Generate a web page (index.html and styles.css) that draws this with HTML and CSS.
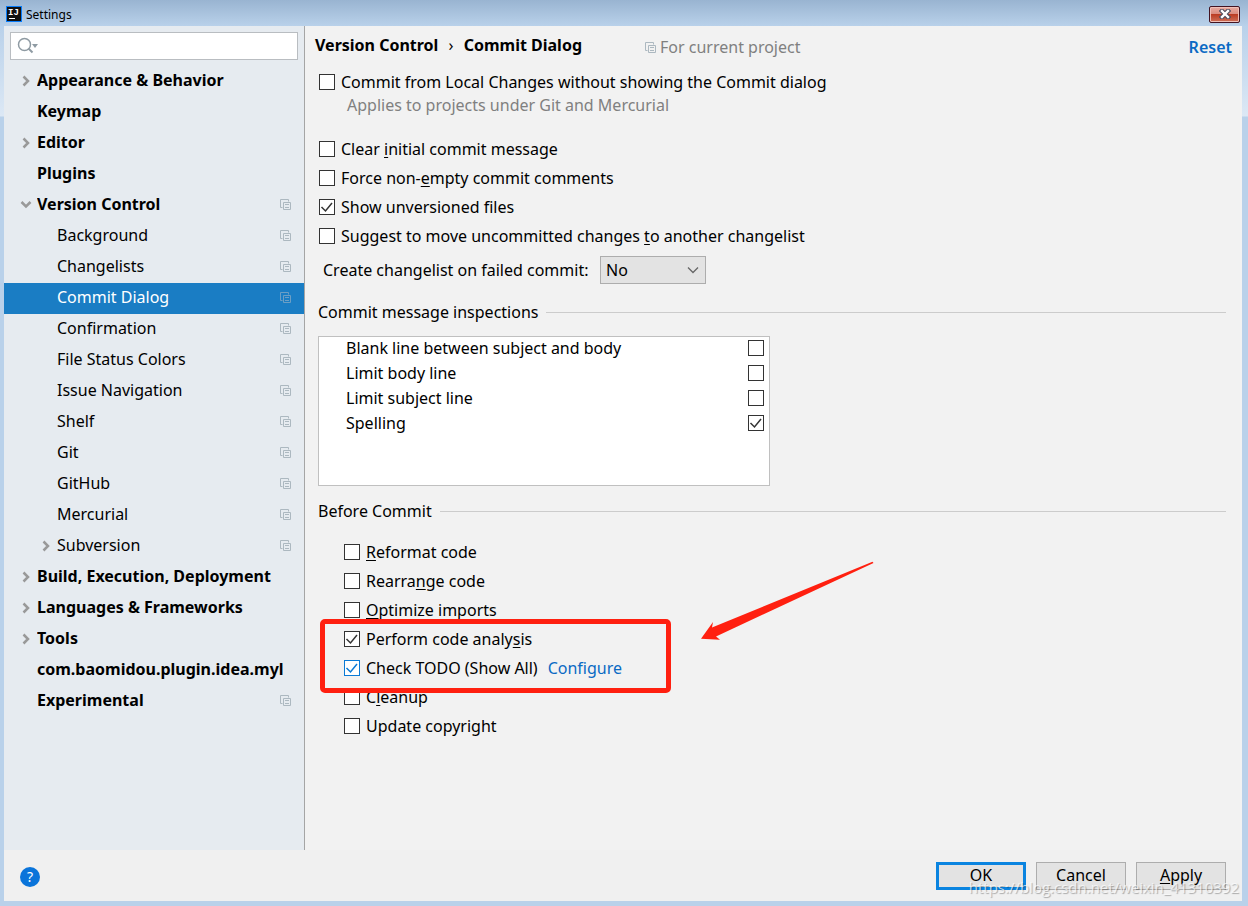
FILE: index.html
```html
<!DOCTYPE html>
<html lang="en">
<head>
  <meta charset="UTF-8">
  <title>Settings</title>
  <meta name="viewport" content="width=device-width, initial-scale=1">
  <link rel="stylesheet" href="styles.css">
</head>
<body>
<svg class="defs" width="0" height="0">
  <symbol id="copy" viewBox="0 0 11 11">
    <path d="M2.500 8.500h-2v-8h8v2" fill="none" stroke="currentColor"/>
    <path d="M3.500 3.500h7v7h-7z" fill="none" stroke="currentColor"/>
    <path d="M5 5.500h4M5 8.500h4" fill="none" stroke="currentColor"/>
  </symbol>
  <symbol id="right" viewBox="0 0 12 12">
    <path d="M3.500 1.500 8 6l-4.500 4.500" fill="none" stroke="currentColor" stroke-width="2.500"/>
  </symbol>
  <symbol id="down" viewBox="0 0 12 12">
    <path d="M1.500 3 6 7.500 10.500 3" fill="none" stroke="currentColor" stroke-width="2.500"/>
  </symbol>
</svg>
<div class="window">
  <header class="titlebar">
    <svg class="app-icon" width="16" height="16" viewBox="0 0 16 16">
      <rect x=".5" y=".5" width="15" height="15" fill="#111" stroke="#087cfa"/>
      <text x="2" y="9" font-family="Liberation Mono" font-size="9" font-weight="bold" fill="#fff">IJ</text>
      <rect x="3" y="12" width="6" height="1" fill="#fff"/>
    </svg>
    <span class="title">Settings</span>
    <button class="close-btn" aria-label="Close">
      <svg width="12" height="10" viewBox="0 0 12 10">
        <path d="M3 2l6 6M9 2l-6 6" stroke="#4a4a5c" stroke-width="4.500" stroke-linecap="square"/>
        <path d="M3 2l6 6M9 2l-6 6" stroke="#fff" stroke-width="2.400" stroke-linecap="square"/>
      </svg>
    </button>
  </header>

  <div class="content">
    <nav class="sidebar">
      <label class="search">
        <svg width="22" height="18" viewBox="0 0 22 18">
          <circle cx="7.500" cy="7.500" r="6" fill="none" stroke="#8f9ba3" stroke-width="1.500"/>
          <path d="M11.500 11.500l4 4" stroke="#8f9ba3" stroke-width="2"/>
          <path d="M15 7h6l-3 4z" fill="#8f9ba3"/>
        </svg>
        <input type="text" aria-label="Search settings">
      </label>
      <ul class="tree">
        <li class="group"><svg class="arrow"><use href="#right"/></svg><span>Appearance &amp; Behavior</span></li>
        <li class="group"><span>Keymap</span></li>
        <li class="group"><svg class="arrow"><use href="#right"/></svg><span>Editor</span></li>
        <li class="group"><span>Plugins</span></li>
        <li class="group"><svg class="arrow"><use href="#down"/></svg><span>Version Control</span><svg class="copy"><use href="#copy"/></svg></li>
        <li><span>Background</span><svg class="copy"><use href="#copy"/></svg></li>
        <li><span>Changelists</span><svg class="copy"><use href="#copy"/></svg></li>
        <li class="selected"><span>Commit Dialog</span><svg class="copy"><use href="#copy"/></svg></li>
        <li><span>Confirmation</span><svg class="copy"><use href="#copy"/></svg></li>
        <li><span>File Status Colors</span><svg class="copy"><use href="#copy"/></svg></li>
        <li><span>Issue Navigation</span><svg class="copy"><use href="#copy"/></svg></li>
        <li><span>Shelf</span><svg class="copy"><use href="#copy"/></svg></li>
        <li><span>Git</span><svg class="copy"><use href="#copy"/></svg></li>
        <li><span>GitHub</span><svg class="copy"><use href="#copy"/></svg></li>
        <li><span>Mercurial</span><svg class="copy"><use href="#copy"/></svg></li>
        <li><svg class="arrow"><use href="#right"/></svg><span>Subversion</span><svg class="copy"><use href="#copy"/></svg></li>
        <li class="group"><svg class="arrow"><use href="#right"/></svg><span>Build, Execution, Deployment</span></li>
        <li class="group"><svg class="arrow"><use href="#right"/></svg><span>Languages &amp; Frameworks</span></li>
        <li class="group"><svg class="arrow"><use href="#right"/></svg><span>Tools</span></li>
        <li class="group"><span>com.baomidou.plugin.idea.myl</span></li>
        <li class="group"><span>Experimental</span><svg class="copy"><use href="#copy"/></svg></li>
      </ul>
    </nav>

    <main class="main">
      <div class="heading">
        <h1>Version Control <span class="sep">›</span> Commit Dialog</h1>
        <span class="scope"><svg class="copy"><use href="#copy"/></svg>For current project</span>
        <a class="reset" href="#">Reset</a>
      </div>

      <label class="check"><input type="checkbox">Commit from Local Changes without showing the Commit dialog</label>
      <p class="hint">Applies to projects under Git and Mercurial</p>

      <div class="options">
        <label class="check"><input type="checkbox"><span>Clear <u>i</u>nitial commit message</span></label>
        <label class="check"><input type="checkbox"><span>Force non-<u>e</u>mpty commit comments</span></label>
        <label class="check"><input type="checkbox" checked><span>Show unversioned files</span></label>
        <label class="check"><input type="checkbox"><span>Suggest to move uncommitted changes <u>t</u>o another changelist</span></label>
      </div>

      <div class="field">
        <label for="failed">Create changelist on failed commit:</label>
        <select id="failed"><option>No</option><option>Yes</option><option>Ask</option></select>
      </div>

      <h2>Commit message inspections</h2>
      <div class="inspections">
        <label>Blank line between subject and body<input type="checkbox"></label>
        <label>Limit body line<input type="checkbox"></label>
        <label>Limit subject line<input type="checkbox"></label>
        <label>Spelling<input type="checkbox" checked></label>
      </div>

      <h2>Before Commit</h2>
      <div class="before">
        <label class="check"><input type="checkbox"><span><u>R</u>eformat code</span></label>
        <label class="check"><input type="checkbox"><span>Rearra<u>n</u>ge code</span></label>
        <label class="check"><input type="checkbox"><span><u>O</u>ptimize imports</span></label>
        <label class="check"><input type="checkbox" checked><span>Perform code analy<u>s</u>is</span></label>
        <div class="todo">
          <label class="check"><input type="checkbox" class="focused" checked><span>Check TODO (Show All)</span></label>
          <a href="#">Configure</a>
        </div>
        <label class="check"><input type="checkbox"><span>C<u>l</u>eanup</span></label>
        <label class="check"><input type="checkbox"><span>Update copyright</span></label>
        <div class="mark-box"></div>
        <svg class="mark-arrow" width="174" height="80" viewBox="0 0 174 80">
          <path d="M0 78.700 12 62 11 67.500 171.500 1.700 172.500 3 15 76.500 19 79.700z" fill="#ff2010"/>
        </svg>
      </div>
    </main>
  </div>

  <footer class="footer">
    <button class="help" aria-label="Help">?</button>
    <button class="btn primary">OK</button>
    <button class="btn">Cancel</button>
    <button class="btn"><u>A</u>pply</button>
  </footer>
  <div class="watermark">https://blog.csdn.net/weixin_41310392</div>
</div>
</body>
</html>
```
FILE: styles.css
```css
* { box-sizing: border-box; }
body {
  margin: 0;
  color: #000;
  font-family: "Noto Sans", "Open Sans", sans-serif;
  font-size: 16px;
  line-height: 22px;
}
button, input, select { font: inherit; color: inherit; margin: 0; }
ul, h1, h2, p { margin: 0; padding: 0; }
a { color: #0a6ac4; text-decoration: none; }
u { text-underline-offset: 2px; text-decoration-thickness: 1px; text-decoration-skip-ink: none; }
.defs { position: absolute; }

.window {
  position: relative;
  display: flex;
  flex-direction: column;
  min-height: 100vh;
  padding: 0 6px 5px 4px;
  background: linear-gradient(#99b4d1 0, #b9d1ea 26px, #dce8f5 116px, #b9d1ea 117px);
}
.titlebar {
  display: flex;
  align-items: center;
  height: 26px;
  padding: 2px 2px 0;
}
.title { margin-left: 4px; padding-top: 2px; font-size: 12px; line-height: 16px; }
.close-btn {
  display: flex;
  align-items: center;
  justify-content: center;
  width: 31px;
  height: 17px;
  margin-left: auto;
  padding: 0;
  border: 1px solid #431422;
  border-radius: 2px;
  background: linear-gradient(#e9aaa0 0, #d98b7e 48%, #bb3d24 50%, #cf7058 100%);
  box-shadow: inset 0 0 0 1px #f0c0b8;
}

.content { display: flex; flex: 1; }

/* settings tree */
.sidebar {
  flex: none;
  width: 301px;
  background: #e6ebf0;
  border-right: 1px solid #a5a5a5;
}
.search {
  display: flex;
  align-items: center;
  height: 28px;
  margin: 6px 6px 6px;
  padding: 0 6px;
  background: #fff;
  border: 1px solid #b9bdc1;
}
.search input { flex: 1; min-width: 0; border: 0; outline: 0; background: none; }
.tree { list-style: none; }
.tree li {
  display: flex;
  align-items: center;
  height: 31px;
  padding: 0 13px 4px 53px;
  white-space: nowrap;
}
.tree li.group { padding-left: 33px; font-weight: 700; }
.tree span { flex: 1; min-width: 0; overflow: hidden; }
.tree li.selected { background: #1a7dc4; color: #fff; }
.arrow { flex: none; width: 12px; height: 12px; margin: 2px 5px 0 -17px; color: #999; }
.copy { flex: none; width: 11px; height: 11px; margin-top: 1px; color: #acb8c0; }
.selected .copy { color: #6c9fc5; }

/* page */
.main { flex: 1; min-width: 0; padding: 0 16px 20px 13px; background: #f2f2f2; }
.heading { display: flex; align-items: center; height: 41px; margin: 0 -6px 0 -3px; }
.heading h1 { padding-bottom: 4px; font-size: 16px; font-weight: 700; line-height: 22px; }
.sep { margin: 0 6px; font-weight: 400; }
.scope { display: flex; align-items: center; gap: 4px; margin-left: 63px; color: #808080; }
.reset { margin-left: auto; font-weight: 600; }

input[type="checkbox"] {
  appearance: none;
  flex: none;
  width: 16px;
  height: 16px;
  background: #fff;
  border: 1px solid #333;
}
input[type="checkbox"]:checked {
  background: #fff url("data:image/svg+xml,%3Csvg xmlns='http://www.w3.org/2000/svg' viewBox='0 0 14 14'%3E%3Cpath d='M1.500 7l4 4L12 3' fill='none' stroke='%23333' stroke-width='1.500'/%3E%3C/svg%3E");
}
input[type="checkbox"].focused {
  border-color: #0a7ad6;
  background-image: url("data:image/svg+xml,%3Csvg xmlns='http://www.w3.org/2000/svg' viewBox='0 0 14 14'%3E%3Cpath d='M1.500 7l4 4L12 3' fill='none' stroke='%230a7ad6' stroke-width='1.500'/%3E%3C/svg%3E");
}
.check { display: flex; align-items: center; gap: 6px; height: 29px; padding-left: 1px; }
.hint { padding-left: 29px; line-height: 18px; color: #808080; }
.options { margin-top: 20px; }
.field { display: flex; align-items: center; gap: 6px; margin-top: 6px; padding-left: 5px; }
.field label { min-width: 271px; }
.field select {
  appearance: none;
  width: 106px;
  height: 28px;
  padding: 0 5px;
  border: 1px solid #adadad;
  border-radius: 0;
  background: #e3e3e3 url("data:image/svg+xml,%3Csvg xmlns='http://www.w3.org/2000/svg' viewBox='0 0 12 8'%3E%3Cpath d='M1 1.500l5 5 5-5' fill='none' stroke='%23666' stroke-width='1.300'/%3E%3C/svg%3E") right 6px center / 12px 8px no-repeat;
}
h2 {
  display: flex;
  align-items: center;
  gap: 8px;
  height: 24px;
  margin-top: 16px;
  font-size: 16px;
  font-weight: 400;
}
h2::after { content: ""; flex: 1; height: 1px; background: #ccc; }
.inspections {
  display: flex;
  flex-direction: column;
  gap: 3px;
  width: 452px;
  max-width: 100%;
  height: 150px;
  margin: 12px 0 13px;
  background: #fff;
  border: 1px solid #c0c0c0;
}
.inspections + h2 { margin-top: 0; }
.inspections label {
  display: flex;
  align-items: center;
  justify-content: space-between;
  height: 22px;
  padding: 0 5px 0 27px;
}
.before { position: relative; margin-top: 14px; padding-left: 25px; }
.todo { display: flex; align-items: center; gap: 10px; }

/* annotations over the options */
.mark-box {
  position: absolute;
  left: 2px;
  top: 82px;
  width: 351px;
  height: 74px;
  border: 5px solid #ff2010;
  border-radius: 5px;
}
.mark-arrow { position: absolute; left: 383px; top: 23px; }

.footer {
  display: flex;
  align-items: center;
  gap: 10px;
  height: 51px;
  padding: 0 16px;
  background: #f0f0f0;
}
.help {
  width: 20px;
  height: 20px;
  margin: 2px auto 0 0;
  padding: 0;
  border: 0;
  border-radius: 50%;
  background: #0a74da;
  color: #fff;
  font-size: 14px;
  line-height: 20px;
}
.btn {
  width: 90px;
  height: 28px;
  padding: 0 0 2px;
  border: 1px solid #adadad;
  background: #e3e3e3;
  line-height: 20px;
}
.btn.primary { border: 3px solid #0a84e0; }
.watermark {
  position: absolute;
  right: 9px;
  bottom: 8px;
  font-family: "Open Sans", sans-serif;
  font-size: 15px;
  color: rgba(255, 255, 255, .7);
  text-shadow: 1px 1px 1px rgba(0, 0, 0, .3);
  pointer-events: none;
}
```
